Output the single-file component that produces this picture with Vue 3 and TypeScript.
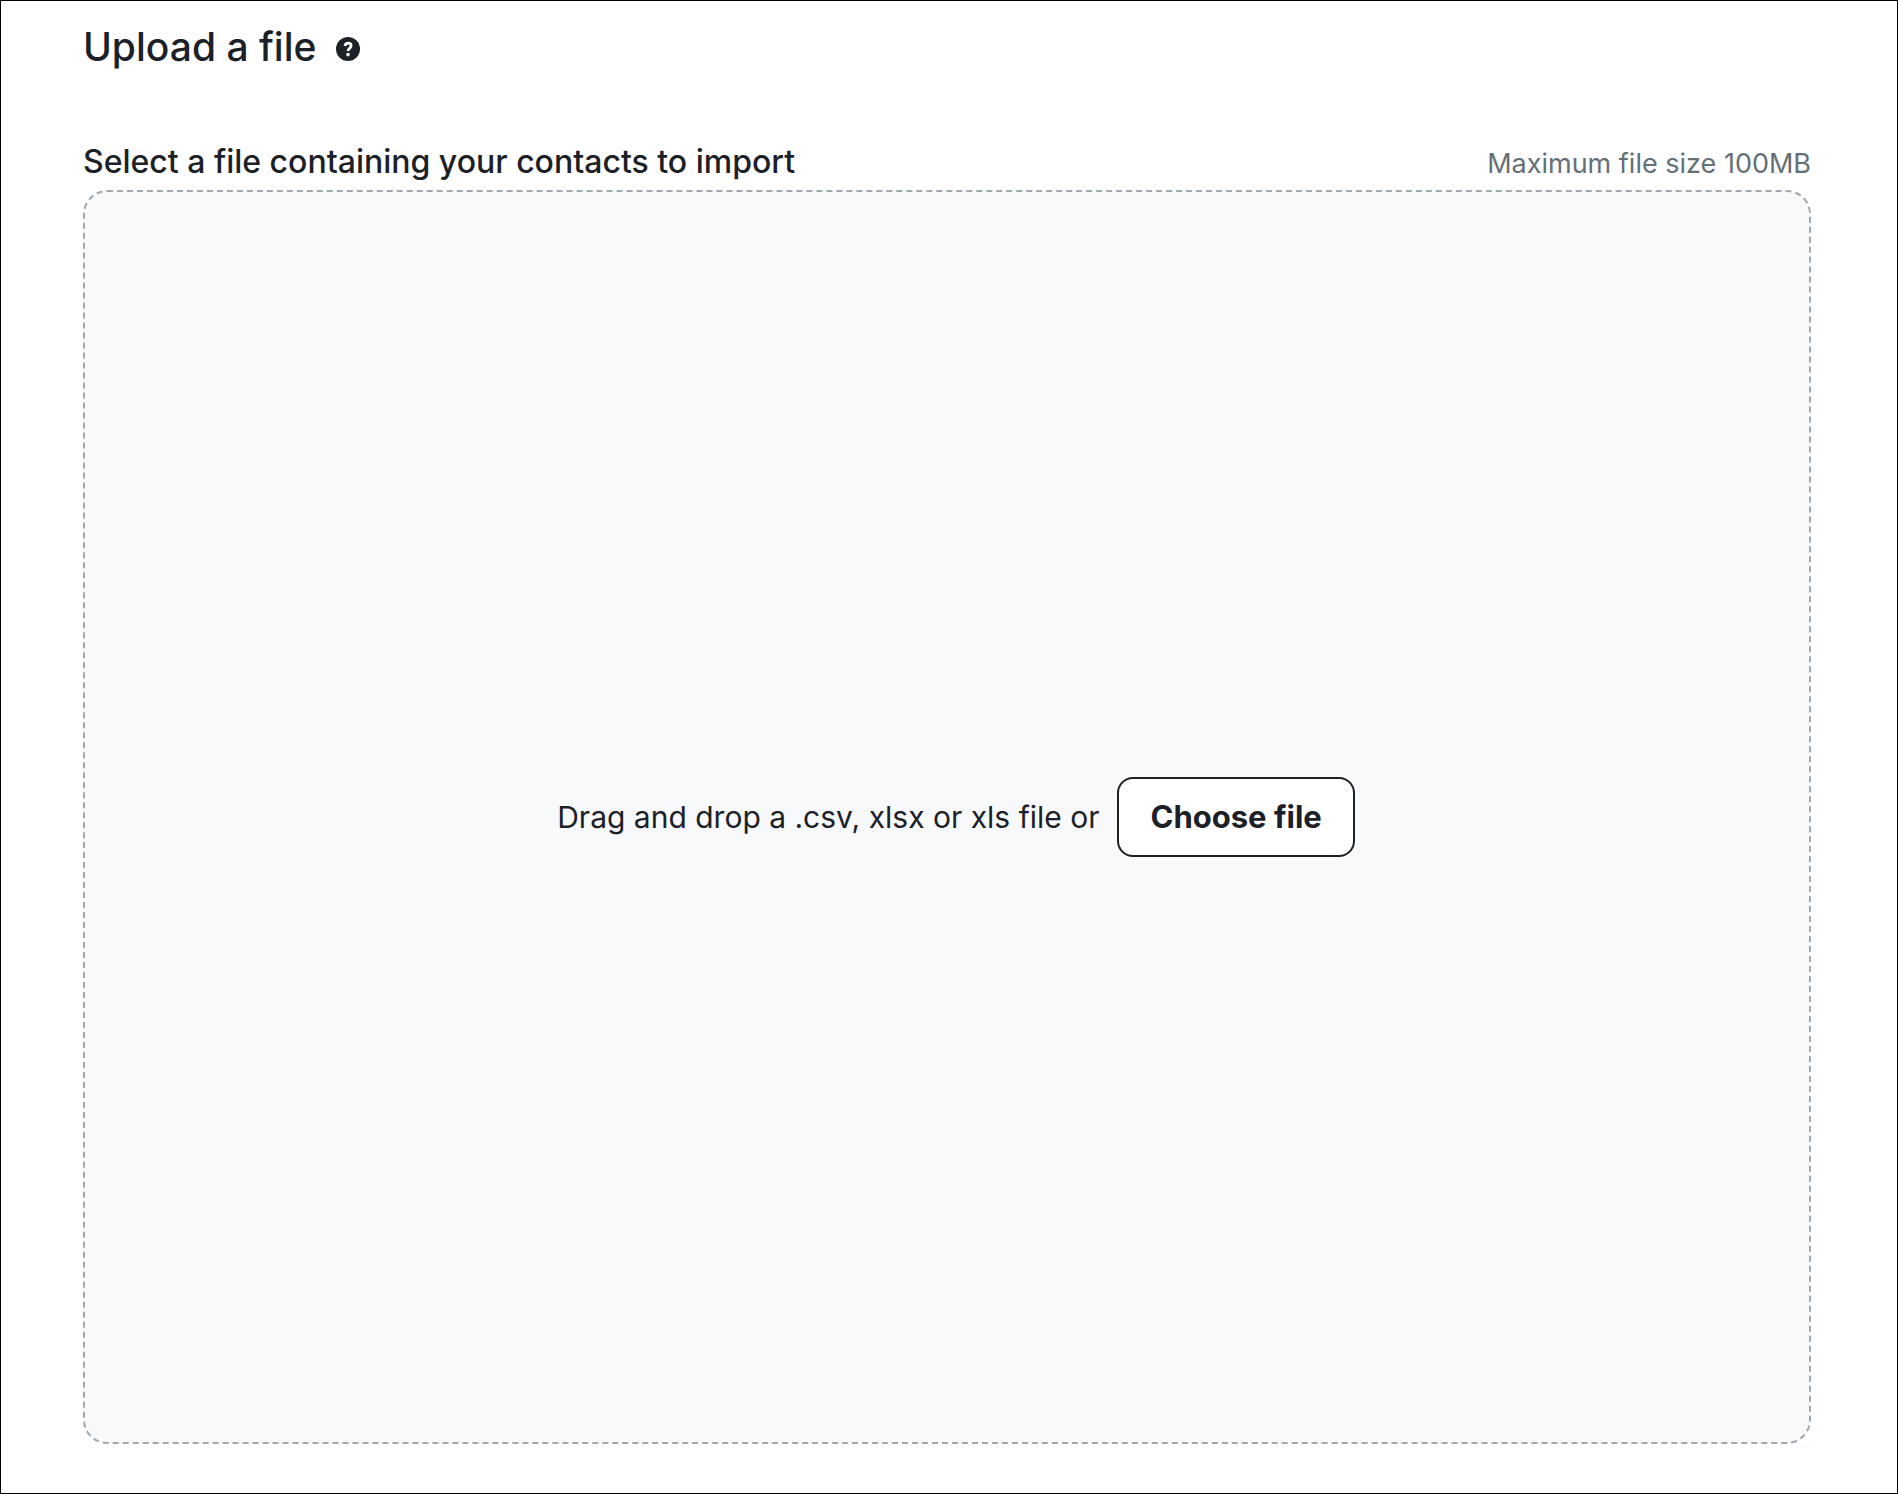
<script setup lang="ts">
import { ref } from 'vue'

const fileInput = ref<HTMLInputElement | null>(null)
const selectedFile = ref<File | null>(null)

function openPicker(): void {
  fileInput.value?.click()
}

function onFileChange(event: Event): void {
  selectedFile.value = (event.target as HTMLInputElement).files?.[0] ?? null
}

function onDrop(event: DragEvent): void {
  selectedFile.value = event.dataTransfer?.files[0] ?? null
}
</script>

<template>
  <main class="page">
    <header class="title-row">
      <h1 class="title">Upload a file</h1>
      <button type="button" class="help" aria-label="Help">
        <svg viewBox="0 0 24 24" aria-hidden="true">
          <circle cx="12" cy="12" r="12" fill="#1c2127" />
          <path
            d="M9 8.9C9.3 7.1 10.5 6.2 12.1 6.2c1.8 0 3 1.1 3 2.6 0 2.6-3.1 2.4-3.1 5.2"
            fill="none"
            stroke="#fff"
            stroke-width="2.8"
          />
          <circle cx="12" cy="17.6" r="1.8" fill="#fff" />
        </svg>
      </button>
    </header>

    <div class="label-row">
      <label class="label" for="contacts-file">Select a file containing your contacts to import</label>
      <span class="hint">Maximum file size 100MB</span>
    </div>

    <section class="dropzone" @dragover.prevent @drop.prevent="onDrop">
      <span class="prompt">Drag and drop a .csv, xlsx or xls file or</span>
      <button type="button" class="choose" @click="openPicker">Choose file</button>
      <input
        id="contacts-file"
        ref="fileInput"
        type="file"
        accept=".csv,.xlsx,.xls"
        hidden
        @change="onFileChange"
      />
    </section>
  </main>
</template>

<style>
body {
  margin: 0;
  background: #fff;
}
</style>

<style scoped>
.page {
  box-sizing: border-box;
  display: flex;
  flex-direction: column;
  min-height: 100vh;
  padding: 22px 86px 49px 82px;
  border: 1px solid #000;
  background: #fff;
  color: #1c2127;
  font-family: Inter, "Liberation Sans", sans-serif;
}

.title-row {
  display: flex;
  align-items: baseline;
  gap: 20px;
}

.title {
  margin: 0;
  font-size: 39px;
  font-weight: 500;
  line-height: 48px;
}

.help {
  display: flex;
  padding: 0;
  border: 0;
  background: none;
  cursor: pointer;
}

.help svg {
  width: 24px;
  height: 24px;
}

.label-row {
  display: flex;
  align-items: baseline;
  justify-content: space-between;
  margin-top: 71px;
  margin-bottom: 6px;
}

.label {
  font-size: 32px;
  font-weight: 500;
  line-height: 40px;
}

.hint {
  color: #656f76;
  font-size: 27px;
  line-height: 40px;
}

.dropzone {
  box-sizing: border-box;
  display: flex;
  flex: 1;
  align-items: center;
  justify-content: center;
  gap: 18px;
  padding-left: 18px;
  border: 2px dashed #a0a8b0;
  border-radius: 24px;
  background: #f8f9fb;
}

.prompt {
  font-size: 30px;
  line-height: 40px;
}

.choose {
  padding: 18px 31px;
  border: 2px solid #1c2127;
  border-radius: 16px;
  background: #fff;
  color: inherit;
  font-family: inherit;
  font-size: 31px;
  font-weight: 700;
  line-height: 40px;
  cursor: pointer;
}
</style>
